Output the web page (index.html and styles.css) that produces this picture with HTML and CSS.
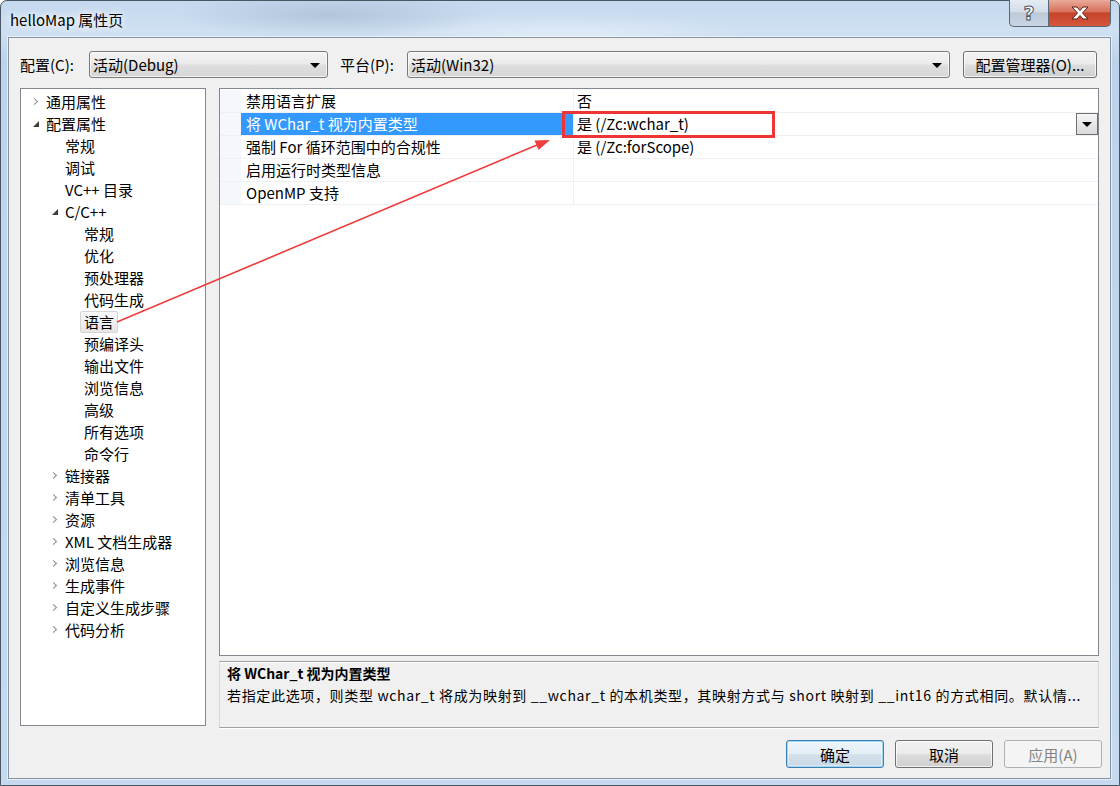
FILE: index.html
```html
<!DOCTYPE html>
<html lang="zh-CN">
<head>
<meta charset="utf-8">
<title>helloMap 属性页</title>
<link rel="stylesheet" href="styles.css">
</head>
<body>
<div class="window">
  <div class="titlebar">
    <span class="title">helloMap 属性页</span>
    <div class="caption-btns">
      <div class="cap-help"><span>?</span></div>
      <div class="cap-close"><svg width="22" height="14" viewBox="0 0 22 14"><path d="M3 1 L8 1 L11 4.5 L14 1 L19 1 L13.5 7 L19 13 L14 13 L11 9.5 L8 13 L3 13 L8.5 7 Z" fill="#fff" stroke="#5b1a10" stroke-width="1" stroke-linejoin="round"/></svg></div>
    </div>
  </div>
  <div class="client">
    <div class="toolbar">
      <label class="lbl lbl-config">配置(C):</label>
      <div class="combo combo-config"><span>活动(Debug)</span><i class="caret"></i></div>
      <label class="lbl lbl-platform">平台(P):</label>
      <div class="combo combo-platform"><span>活动(Win32)</span><i class="caret"></i></div>
      <div class="btn btn-manager">配置管理器(O)...</div>
    </div>
    <div class="main">
      <div class="tree">
        <div class="node l1"><i class="tw closed"></i><span>通用属性</span></div>
        <div class="node l1"><i class="tw open"></i><span>配置属性</span></div>
        <div class="node l2"><span>常规</span></div>
        <div class="node l2"><span>调试</span></div>
        <div class="node l2"><span>VC++ 目录</span></div>
        <div class="node l2"><i class="tw open"></i><span>C/C++</span></div>
        <div class="node l3"><span>常规</span></div>
        <div class="node l3"><span>优化</span></div>
        <div class="node l3"><span>预处理器</span></div>
        <div class="node l3"><span>代码生成</span></div>
        <div class="node l3 selected"><span>语言</span></div>
        <div class="node l3"><span>预编译头</span></div>
        <div class="node l3"><span>输出文件</span></div>
        <div class="node l3"><span>浏览信息</span></div>
        <div class="node l3"><span>高级</span></div>
        <div class="node l3"><span>所有选项</span></div>
        <div class="node l3"><span>命令行</span></div>
        <div class="node l2"><i class="tw closed"></i><span>链接器</span></div>
        <div class="node l2"><i class="tw closed"></i><span>清单工具</span></div>
        <div class="node l2"><i class="tw closed"></i><span>资源</span></div>
        <div class="node l2"><i class="tw closed"></i><span>XML 文档生成器</span></div>
        <div class="node l2"><i class="tw closed"></i><span>浏览信息</span></div>
        <div class="node l2"><i class="tw closed"></i><span>生成事件</span></div>
        <div class="node l2"><i class="tw closed"></i><span>自定义生成步骤</span></div>
        <div class="node l2"><i class="tw closed"></i><span>代码分析</span></div>
      </div>
      <div class="right">
        <div class="grid">
          <div class="row"><div class="gutter"></div><div class="name">禁用语言扩展</div><div class="value">否</div></div>
          <div class="row active"><div class="gutter"></div><div class="name">将 WChar_t 视为内置类型</div><div class="value">是 (/Zc:wchar_t)<div class="dd"><i class="caret"></i></div></div></div>
          <div class="row"><div class="gutter"></div><div class="name">强制 For 循环范围中的合规性</div><div class="value">是 (/Zc:forScope)</div></div>
          <div class="row"><div class="gutter"></div><div class="name">启用运行时类型信息</div><div class="value"></div></div>
          <div class="row"><div class="gutter"></div><div class="name">OpenMP 支持</div><div class="value"></div></div>
        </div>
        <div class="desc">
          <div class="desc-title">将 WChar_t 视为内置类型</div>
          <div class="desc-text">若指定此选项，则类型 wchar_t 将成为映射到 __wchar_t 的本机类型，其映射方式与 short 映射到 __int16 的方式相同。默认情...</div>
        </div>
      </div>
    </div>
    <div class="footer">
      <div class="btn btn-ok">确定</div>
      <div class="btn btn-cancel">取消</div>
      <div class="btn btn-apply disabled">应用(A)</div>
    </div>
  </div>
  <div class="redbox"></div>
  <svg class="annot" width="1120" height="786" viewBox="0 0 1120 786">
    <line x1="117" y1="322" x2="537" y2="145" stroke="#f03c3c" stroke-width="1.6"/>
    <polygon points="550,140 538.5,150 534.5,140.5" fill="#f03c3c"/>
  </svg>
</div>
</body>
</html>
```
FILE: styles.css
```css
* { box-sizing: border-box; }
html, body { margin: 0; padding: 0; }
body {
  width: 1120px;
  height: 786px;
  overflow: hidden;
  font-family: "Noto Sans CJK SC", "Microsoft YaHei", sans-serif;
  font-size: 15px;
  color: #000;
}
.window {
  position: relative;
  width: 1120px;
  height: 786px;
  border: 1px solid #4a5663;
  border-radius: 7px 7px 0 0;
  background:
    radial-gradient(ellipse 160px 22px at 330px 14px, rgba(150,170,195,0.45), rgba(150,170,195,0) 100%),
    radial-gradient(ellipse 200px 30px at 560px 40px, rgba(255,255,255,0.45), rgba(255,255,255,0) 100%),
    linear-gradient(180deg, #c4d8ee 0%, #cfe0f2 30px, #bcd3eb 60px, #c5daef 100%);
  padding: 36px 8px 7px 7px;
}
.titlebar {
  position: absolute;
  left: 0; top: 0; right: 0;
  height: 36px;
}
.title {
  position: absolute;
  left: 9px;
  top: 9px;
  font-size: 15px;
  line-height: 20px;
  text-shadow: 0 0 6px #fff, 0 0 10px #fff;
}
.caption-btns {
  position: absolute;
  right: 8px;
  top: -1px;
  display: flex;
}
.cap-help, .cap-close {
  height: 27px;
  display: flex;
  align-items: center;
  justify-content: center;
  border: 1px solid #5a6878;
  border-top: none;
}
.cap-help {
  width: 39px;
  border-radius: 0 0 0 5px;
  border-right: none;
  background: linear-gradient(180deg, #e4ebf3 0%, #d3dde8 45%, #bcc9d7 50%, #c9d5e2 100%);
}
.cap-help span {
  font-family: "DejaVu Sans", sans-serif;
  font-weight: bold;
  font-size: 19px;
  line-height: 20px;
  color: #fff;
  -webkit-text-stroke: 1px #4b5560;
}
.cap-close {
  width: 63px;
  border-radius: 0 0 5px 0;
  background: linear-gradient(180deg, #e9a999 0%, #d8715c 45%, #c7432a 50%, #d4573d 100%);
}
.client {
  width: 1103px;
  height: 742px;
  border: 1px solid #8793a0;
  box-shadow: 0 0 0 1px rgba(255,255,255,0.55);
  background: #f0f0f0;
  padding: 13px 10px 0 11px;
  display: flex;
  flex-direction: column;
}
.toolbar {
  display: flex;
  align-items: center;
  height: 27px;
}
.lbl {
  line-height: 27px;
  white-space: nowrap;
}
.lbl-config { width: 69px; }
.lbl-platform { width: 67px; margin-left: 12px; }
.combo {
  position: relative;
  height: 27px;
  border: 1px solid #7a7a7a;
  border-radius: 3px;
  background: linear-gradient(180deg, #f3f3f3 0%, #ebebeb 48%, #dedede 52%, #d6d6d6 100%);
  box-shadow: inset 0 0 0 1px rgba(255,255,255,0.7);
  padding-left: 3px;
  line-height: 25px;
}
.combo-config { width: 239px; }
.combo-platform { width: 543px; }
.caret {
  position: absolute;
  width: 0; height: 0;
  border-left: 5px solid transparent;
  border-right: 5px solid transparent;
  border-top: 5px solid #000;
}
.combo .caret { right: 7px; top: 11px; }
.btn {
  height: 28px;
  border: 1px solid #707070;
  border-radius: 3px;
  background: linear-gradient(180deg, #f2f2f2 0%, #ebebeb 48%, #dddddd 52%, #cfcfcf 100%);
  box-shadow: inset 0 0 0 1px rgba(255,255,255,0.75);
  display: flex;
  align-items: center;
  justify-content: center;
  white-space: nowrap;
}
.btn-manager { width: 134px; height: 27px; margin-left: 13px; }
.main {
  display: flex;
  align-items: flex-start;
  margin-top: 10px;
  height: 640px;
}
.tree {
  width: 186px;
  height: 638px;
  border: 1px solid #828790;
  background: #fff;
  padding-top: 1px;
}
.node {
  position: relative;
  height: 22px;
  line-height: 22px;
  white-space: nowrap;
}
.node span { display: inline-block; padding: 0 3px; line-height: 20px; margin-top: 1px; border: 1px solid transparent; border-radius: 2px; }
.node.l1 span { margin-left: 21px; }
.node.l2 span { margin-left: 40px; }
.node.l3 span { margin-left: 59px; }
.node.selected span {
  background: linear-gradient(180deg, #f8f8f8, #e6e6e6);
  border-color: #d4d4d4;
}
.tw { position: absolute; top: 8px; }
.tw.closed {
  width: 5px; height: 5px;
  border-top: 1px solid #8c8c8c;
  border-right: 1px solid #8c8c8c;
  transform: rotate(45deg);
  top: 9px;
}
.l1 .tw.closed { left: 11px; }
.l2 .tw.closed { left: 30px; }
.tw.open {
  width: 0; height: 0;
  border-left: 6px solid transparent;
  border-bottom: 6px solid #3c3c3c;
  top: 9px;
}
.l1 .tw.open { left: 12px; }
.l2 .tw.open { left: 31px; }
.right {
  margin-left: 13px;
  width: 880px;
  display: flex;
  flex-direction: column;
}
.grid {
  height: 568px;
  border: 1px solid #828790;
  background: #fff;
  padding-top: 1px;
}
.row {
  display: flex;
  height: 23px;
  border-bottom: 1px solid #eef0f3;
}
.gutter {
  width: 21px;
  background: #f4f7fb;
}
.name {
  width: 333px;
  padding-left: 5px;
  line-height: 22px;
  white-space: nowrap;
  border-right: 1px solid #eef0f3;
}
.value {
  position: relative;
  flex: 1;
  padding-left: 3px;
  line-height: 22px;
  white-space: nowrap;
}
.row.active .name {
  background: #3399ff;
  color: #fff;
}
.dd {
  position: absolute;
  right: 0;
  top: 0;
  width: 22px;
  height: 22px;
  border: 1px solid #6f6f6f;
  background: linear-gradient(180deg, #f6f6f6 0%, #e8e8e8 50%, #d9d9d9 100%);
}
.dd .caret { left: 5px; top: 8px; }
.desc {
  margin-top: 5px;
  height: 67px;
  border-top: 1px solid #a0a0a0;
  border-bottom: 1px solid #a0a0a0;
  border-left: 1px solid #d8d8d8;
  border-right: 1px solid #d8d8d8;
  box-shadow: inset 0 1px 0 #fff, 0 1px 0 #fff;
  padding: 1px 8px 0 7px;
}
.desc-title {
  font-weight: bold;
  font-size: 14px;
  line-height: 20px;
}
.desc-text {
  font-size: 14px;
  letter-spacing: 0.66px;
  line-height: 22px;
  margin-top: 1px;
  white-space: nowrap;
}
.footer {
  display: flex;
  justify-content: flex-end;
  gap: 11px;
  margin-top: 12px;
  margin-right: -2px;
}
.footer .btn { width: 98px; }
.btn-ok {
  border-color: #3c7fb1;
  box-shadow: inset 0 0 0 1px #9fd6f6, inset 0 0 0 2px rgba(255,255,255,0.4);
  background: linear-gradient(180deg, #eef6fb 0%, #e4eef5 48%, #d3e1eb 52%, #c8d8e4 100%);
}
.btn-apply.disabled {
  border-color: #adb2b5;
  background: #f4f4f4;
  color: #838383;
  box-shadow: none;
}
.redbox {
  position: absolute;
  left: 561px;
  top: 110px;
  width: 213px;
  height: 27px;
  border: 3px solid #ee3535;
}
.annot {
  position: absolute;
  left: -1px;
  top: -1px;
  pointer-events: none;
}
```
